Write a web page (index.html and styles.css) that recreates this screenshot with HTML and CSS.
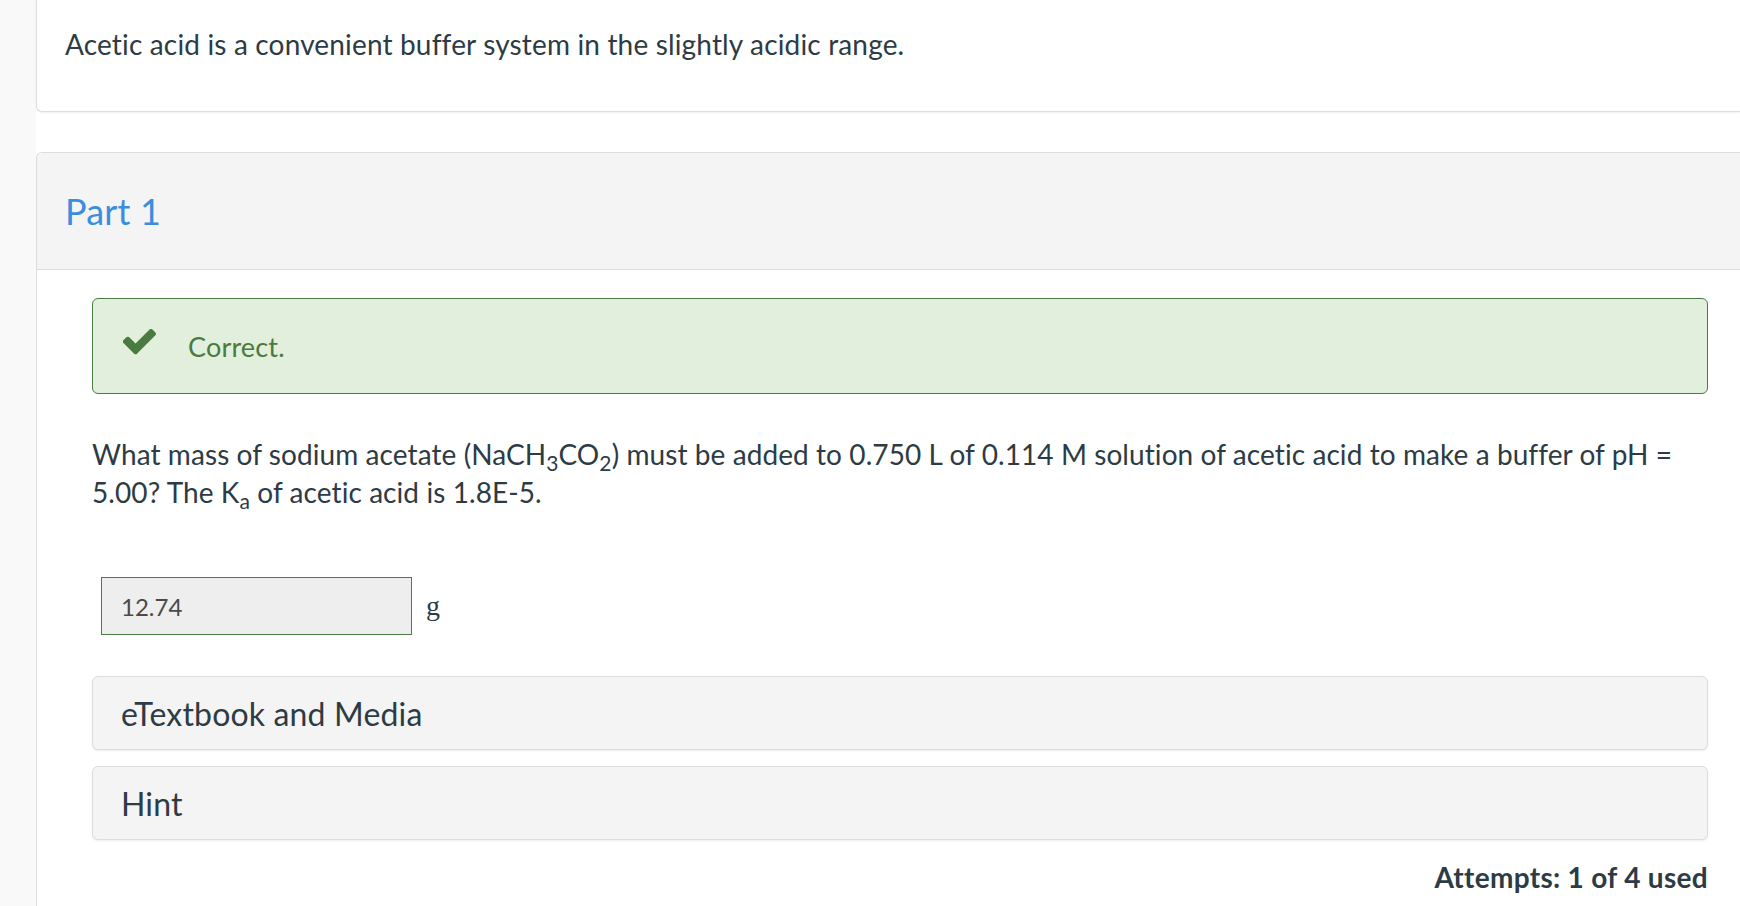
FILE: index.html
```html
<!DOCTYPE html>
<html lang="en">

<head>
    <meta charset="UTF-8">
    <meta name="viewport" content="width=device-width, initial-scale=1.0">
    <title>Question</title>
    <link rel="stylesheet" href="styles.css">
</head>

<body>
    <div class="page">
        <div class="rail"></div>
        <div class="main">
            <div class="intro">
                <p>Acetic acid is a convenient buffer system in the slightly acidic range.</p>
            </div>

            <div class="part">
                <div class="part-head">
                    <h2>Part 1</h2>
                </div>
                <div class="part-body">
                    <div class="feedback">
                        <svg class="check" viewBox="128 340 1543 1210" width="33" height="26">
                            <path fill="#497b41" d="M1671 566q0 40-28 68l-724 724-136 136q-28 28-68 28t-68-28l-136-136-362-362q-28-28-28-68t28-68l136-136q28-28 68-28t68 28l294 295 656-657q28-28 68-28t68 28l136 136q28 28 28 68z" />
                        </svg>
                        <span>Correct.</span>
                    </div>

                    <p class="question">What mass of sodium acetate (NaCH<sub>3</sub>CO<sub>2</sub>) must be added to 0.750 L of 0.114 M solution of acetic acid to make a buffer of pH = 5.00? The K<sub>a</sub> of acetic acid is 1.8E-5.</p>

                    <div class="answer">
                        <input class="answer-input" type="text" value="12.74" readonly>
                        <span class="unit">g</span>
                    </div>

                    <div class="panel">eTextbook and Media</div>
                    <div class="panel">Hint</div>

                    <div class="attempts">Attempts: 1 of 4 used</div>
                </div>
            </div>
        </div>
    </div>
</body>

</html>
```

FILE: styles.css
```css
* {
    padding: 0;
    margin: 0;
    box-sizing: border-box;
}

body {
    font-family: Lato, "Noto Sans", sans-serif;
    color: #2d3b45;
    background-color: #fff;
    letter-spacing: .16px;
    overflow: hidden;
}

.page {
    display: flex;
    min-height: 100vh;
}

.rail {
    width: 36px;
    flex-shrink: 0;
    background-color: #f9f9f9;
}

.main {
    flex: 1;
    min-width: 0;
}

.intro {
    border: 1px solid #ddd;
    border-top: none;
    border-right: none;
    border-bottom-left-radius: 6px;
    box-shadow: 0 1px 2px rgba(0, 0, 0, .06);
    padding: 25px 0 47px 28px;
}

.intro p {
    font-size: 28px;
    line-height: 39px;
}

.part {
    margin-top: 40px;
    border: 1px solid #ddd;
    border-right: none;
    border-bottom: none;
    border-top-left-radius: 6px;
    min-height: 760px;
}

.part-head {
    background-color: #f4f4f4;
    border-bottom: 1px solid #ddd;
    border-top-left-radius: 6px;
    padding: 37px 0 37px 28px;
}

.part-head h2 {
    font-size: 36px;
    line-height: 42px;
    font-weight: 400;
    color: #3c8ddd;
}

.part-body {
    padding: 28px 32px 0 55px;
}

.feedback {
    display: flex;
    align-items: center;
    height: 96px;
    padding-left: 30px;
    background-color: #e2efdc;
    border: 1px solid #4b7d43;
    border-radius: 6px;
    color: #497b41;
    font-size: 27px;
}

.check {
    margin-right: 32px;
    margin-bottom: 9px;
}

.question {
    margin-top: 41px;
    font-size: 28px;
    line-height: 38px;
    letter-spacing: .08px;
}

.question sub {
    font-size: 21px;
    line-height: 0;
    vertical-align: -6px;
}

.answer {
    display: flex;
    align-items: center;
    margin-top: 66px;
    padding-left: 9px;
}

.answer-input {
    width: 311px;
    height: 58px;
    padding-left: 19px;
    background-color: #eee;
    border: 1px solid #4b7d43;
    border-radius: 0;
    font-family: Lato, sans-serif;
    font-size: 24px;
    color: #4a4a4a;
    outline: none;
}

.unit {
    margin-left: 14px;
    font-family: "Liberation Serif", serif;
    font-size: 28px;
}

.panel {
    height: 74px;
    display: flex;
    align-items: center;
    padding-left: 28px;
    background-color: #f4f4f4;
    border: 1px solid #ddd;
    border-radius: 6px;
    box-shadow: 0 1px 2px rgba(0, 0, 0, .08);
    font-size: 32px;
}

.answer+.panel {
    margin-top: 41px;
}

.panel+.panel {
    margin-top: 16px;
}

.attempts {
    margin-top: 20px;
    text-align: right;
    font-size: 28px;
    font-weight: 700;
    letter-spacing: .3px;
}
```
